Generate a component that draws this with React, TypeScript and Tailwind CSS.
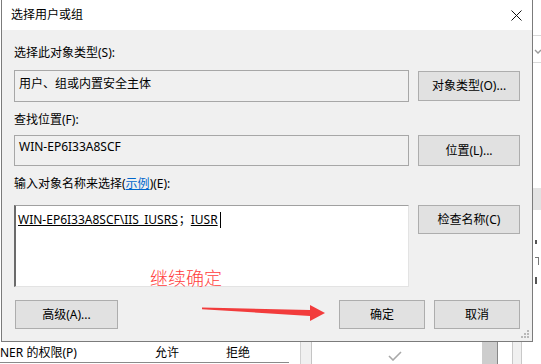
const ui = { fontFamily: '"Noto Sans", "Noto Sans CJK SC", sans-serif' };

function Btn({ label, className = '' }: { label: string; className?: string }) {
  return (
    <div
      className={`flex items-center justify-center border border-[#adadad] bg-[#e1e1e1] text-[12px] text-black ${className}`}
    >
      {label}
    </div>
  );
}

function Grip() {
  return (
    <svg width="10" height="10" viewBox="0 0 10 10" className="absolute bottom-[2px] right-[2px]">
      {[
        [7, 1],
        [4, 4],
        [7, 4],
        [1, 7],
        [4, 7],
        [7, 7],
      ].map(([x, y], i) => (
        <rect key={i} x={x} y={y} width="2" height="2" fill="#b8b8b8" />
      ))}
    </svg>
  );
}

export default function App() {
  return (
    <div className="relative h-[364px] w-[541px] overflow-hidden bg-white text-black" style={ui}>
      <div className="flex">
        <div className="w-[1px]" />

        {/* dialog */}
        <div className="relative flex h-[342px] w-[532px] flex-col border-x border-b border-[#7b7b7b]">
          <div className="flex h-[30px] items-center justify-between bg-white pl-[9px] pr-[10px]">
            <span className="text-[12px]">选择用户或组</span>
            <svg width="11" height="11" viewBox="0 0 11 11">
              <path d="M0.5 0.5 L10.5 10.5 M10.5 0.5 L0.5 10.5" stroke="#111" strokeWidth="1" />
            </svg>
          </div>

          <div className="flex flex-1 flex-col bg-[#f0f0f0] px-[12px] pt-[15px] text-[12px] leading-[16px]">
            <div>选择此对象类型(S):</div>
            <div className="mt-[9px] flex gap-[9px]">
              <div className="h-[32px] w-[395px] border border-[#a7a7a7] bg-[#f0f0f0] pl-[4px] pt-[5px]">
                用户、组或内置安全主体
              </div>
              <Btn label="对象类型(O)..." className="mt-[1px] h-[30px] w-[102px]" />
            </div>

            <div className="mt-[10px]">查找位置(F):</div>
            <div className="mt-[7px] flex gap-[9px]">
              <div className="h-[31px] w-[395px] border border-[#a7a7a7] bg-[#f0f0f0] pl-[4px] pt-[3px]">
                WIN-EP6I33A8SCF
              </div>
              <Btn label="位置(L)..." className="h-[31px] w-[102px]" />
            </div>

            <div className="mt-[10px]">
              输入对象名称来选择(<span className="text-[#0066cc] underline">示例</span>)(E):
            </div>
            <div className="mt-[13px] flex gap-[9px]">
              <div className="flex h-[82px] w-[395px] items-start border-b border-l-2 border-r border-t border-b-[#e3e3e3] border-l-[#6b6b6b] border-r-[#e3e3e3] border-t-[#a0a0a0] bg-white pl-[2px] pt-[6px]">
                <span className="underline">WIN-EP6I33A8SCF\IIS_IUSRS</span>
                <span className="ml-[1px]">；</span>
                <span className="underline">IUSR</span>
                <span className="ml-[2px] h-[16px] w-[1px] bg-black" />
              </div>
              <Btn label="检查名称(C)" className="h-[29px] w-[102px]" />
            </div>

            <div className="mt-[13px] flex items-center">
              <Btn label="高级(A)..." className="ml-[1px] h-[29px] w-[103px]" />
              <div className="flex-1" />
              <Btn label="确定" className="h-[29px] w-[86px]" />
              <Btn label="取消" className="ml-[9px] h-[29px] w-[86px]" />
            </div>
          </div>
          <Grip />
        </div>

        {/* window behind, right edge */}
        <div className="flex w-[8px] flex-col">
          <div className="mt-[35px] h-[1px] bg-[#d9d9d9]" />
          <svg width="8" height="6" viewBox="0 0 8 6" className="ml-[1px] mt-[13px]">
            <path d="M1 1 L4 4 L7 1" fill="none" stroke="#9a9a9a" strokeWidth="1.4" />
          </svg>
          <div className="mt-[7px] h-[1px] bg-[#d9d9d9]" />
          <div className="mt-[125px] h-[22px] bg-[#e3e3e3]" />
          <div className="ml-[2px] mt-[30px] h-[4px] w-[2px] bg-[#555]" />
          <div className="ml-[2px] mt-[13px] h-[8px] w-[4px] border-r border-t border-[#777]" />
          <div className="ml-[2px] mt-[12px] h-[7px] w-[2px] bg-[#555]" />
        </div>
      </div>

      {/* window behind, bottom */}
      <div className="flex h-[22px] text-[12px] leading-[16px]">
        <div className="flex w-[289px] flex-col">
          <div className="flex pt-[3px]">
            <span className="w-[155px]">NER 的权限(P)</span>
            <span className="w-[71px]">允许</span>
            <span>拒绝</span>
          </div>
          <div className="mt-auto mb-[1px] h-[1px] bg-[#8a8a8a]" />
        </div>
        <div className="ml-[11px] w-[1px] bg-[#d0d0d0]" />
        <div className="w-[10px] bg-[#f0f0f0]" />
        <div className="w-[1px] bg-[#c4c4c4]" />
        <div className="flex w-[170px] justify-center pt-[9px]">
          <svg width="14" height="10" viewBox="0 0 14 10" className="ml-[-4px]">
            <path d="M1 5 L5 9 L13 1" fill="none" stroke="#a8a8a8" strokeWidth="1.6" />
          </svg>
        </div>
        <div className="w-[15px] bg-[#cdcdcd]" />
        <div className="w-[1px] bg-[#888]" />
        <div className="w-[14px] bg-white" />
        <div className="w-[1px] bg-[#c8c8c8]" />
        <div className="w-[8px] bg-[#f0f0f0]" />
        <div className="w-[1px] bg-[#c8c8c8]" />
      </div>

      {/* annotation */}
      <div
        className="absolute left-[150px] top-[266px] text-[18px] font-light leading-[22px] text-[#ff3d3d]"
        style={{ fontFamily: '"Noto Sans CJK SC", sans-serif' }}
      >
        继续确定
      </div>
      <svg className="absolute left-0 top-0" width="541" height="364" viewBox="0 0 541 364">
        <polygon
          points="202,307.6 310,310 310,305 325,313 310,321 310,316 202,309.2"
          fill="#f23c3c"
        />
      </svg>
    </div>
  );
}
